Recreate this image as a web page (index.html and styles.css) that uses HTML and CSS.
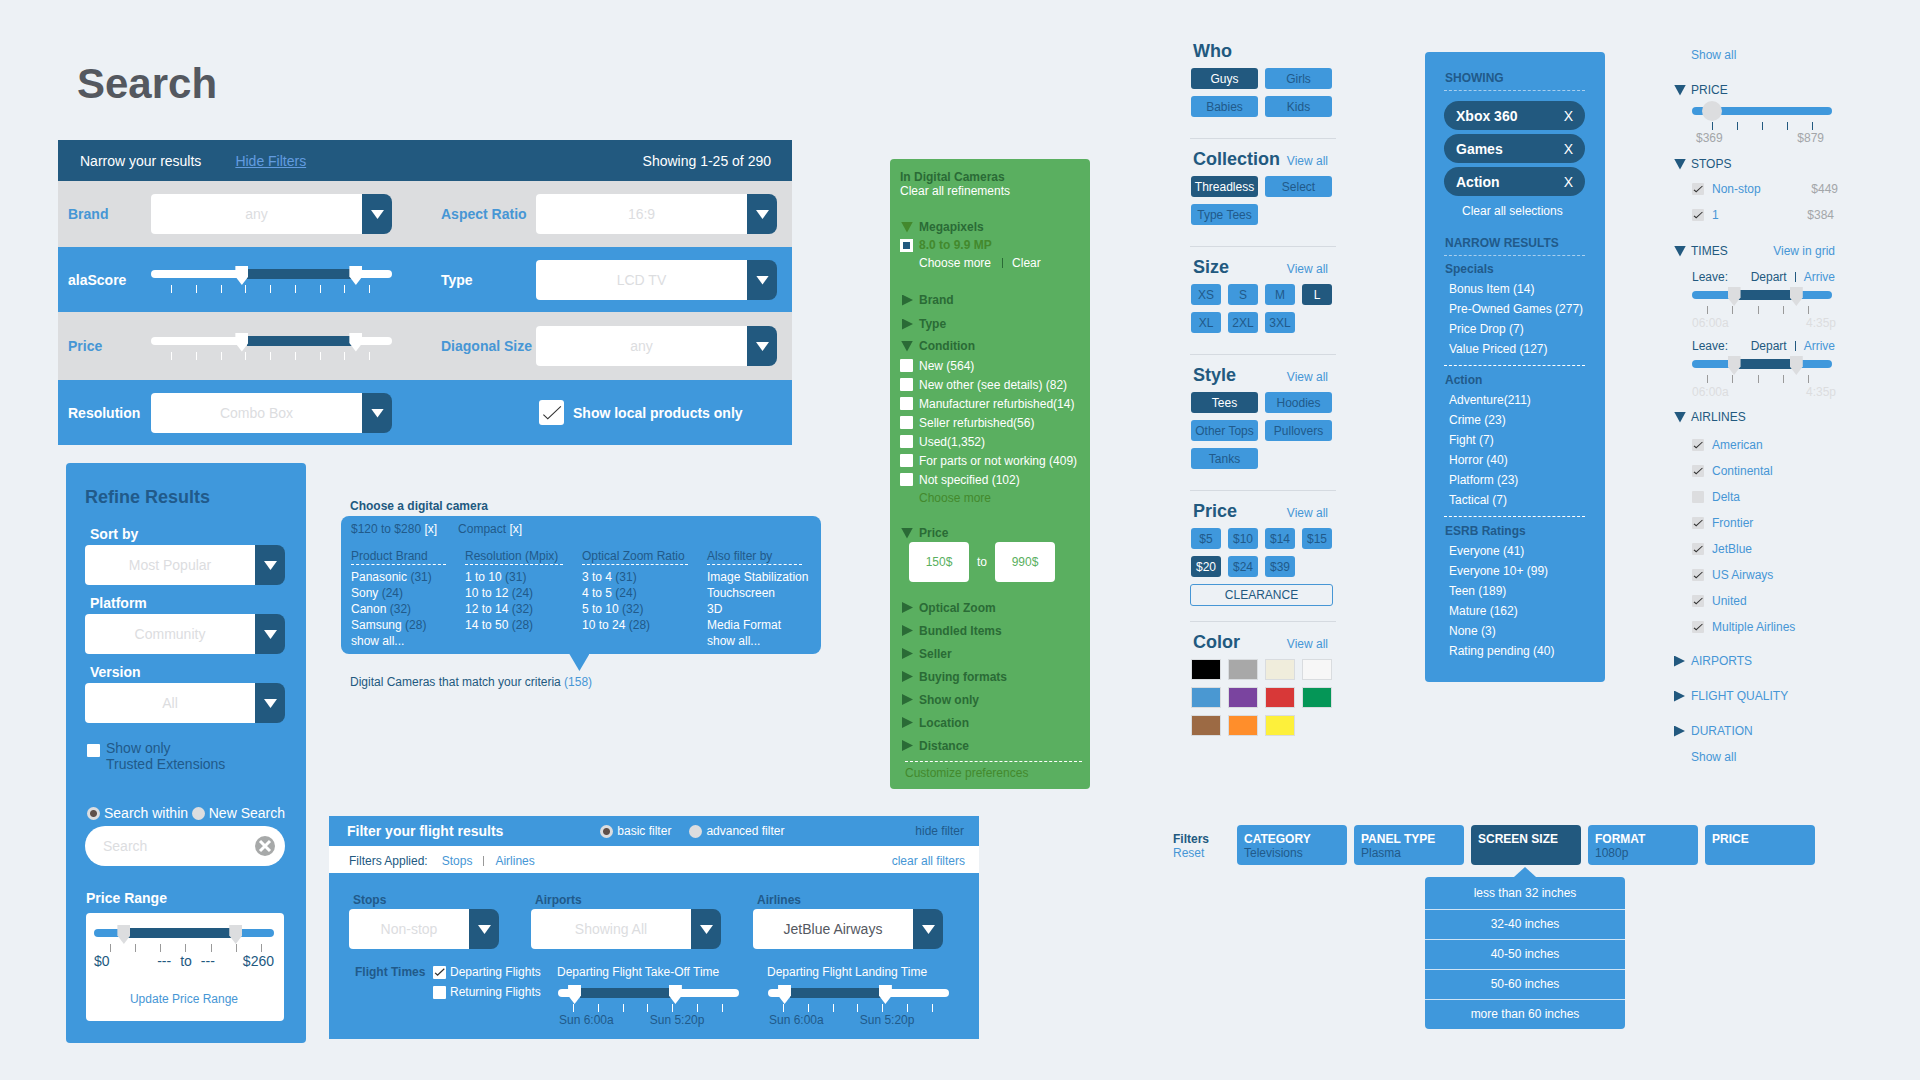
FILE: index.html
```html
<!DOCTYPE html>
<html lang="en">
  <head>
    <meta charset="UTF-8">
    <meta name="viewport" content="width=device-width, initial-scale=1.0">
    <title>Search</title>
    <link rel="stylesheet" href="styles.css">
  </head>
  <body>
    <main class="page">
      <div class="left">
        <h1>Search</h1>
        <div class="panels">

          <!-- narrow your results -->
          <form class="narrow">
            <div class="narrow_head">
              <span>Narrow your results</span>
              <a href="#">Hide Filters</a>
              <span class="push">Showing 1-25 of 290</span>
            </div>
            <div class="narrow_row grey">
              <label for="brand">Brand</label>
              <div class="combo"><select id="brand"><option>any</option></select></div>
              <label class="second" for="ratio">Aspect Ratio</label>
              <div class="combo"><select id="ratio"><option>16:9</option></select></div>
            </div>
            <div class="narrow_row">
              <label for="score_min">alaScore</label>
              <div class="slider">
                <div class="track"><span class="fill" style="left:40%;width:46%"></span></div>
                <input id="score_min" type="range" value="37">
                <input type="range" value="87" aria-label="alaScore maximum">
                <div class="ticks"><i></i><i></i><i></i><i></i><i></i><i></i><i></i><i></i><i></i></div>
              </div>
              <label class="second" for="type">Type</label>
              <div class="combo"><select id="type"><option>LCD TV</option></select></div>
            </div>
            <div class="narrow_row grey tall">
              <label for="price_min">Price</label>
              <div class="slider">
                <div class="track"><span class="fill" style="left:40%;width:46%"></span></div>
                <input id="price_min" type="range" value="37">
                <input type="range" value="87" aria-label="Price maximum">
                <div class="ticks"><i></i><i></i><i></i><i></i><i></i><i></i><i></i><i></i><i></i></div>
              </div>
              <label class="second" for="diag">Diagonal Size</label>
              <div class="combo"><select id="diag"><option>any</option></select></div>
            </div>
            <div class="narrow_row">
              <label for="res">Resolution</label>
              <div class="combo"><select id="res"><option>Combo Box</option></select></div>
              <label class="local"><input class="box big" type="checkbox" checked>Show local products only</label>
            </div>
          </form>

          <!-- refine results -->
          <form class="refine">
            <h2>Refine Results</h2>
            <label class="top" for="sort">Sort by</label>
            <div class="combo"><select id="sort"><option>Most Popular</option></select></div>
            <label class="top" for="platform">Platform</label>
            <div class="combo"><select id="platform"><option>Community</option></select></div>
            <label class="top" for="version">Version</label>
            <div class="combo"><select id="version"><option>All</option></select></div>
            <label class="trusted"><input class="box" type="checkbox"><span>Show only<br>Trusted Extensions</span></label>
            <div class="radios">
              <label><input class="dot" type="radio" name="scope" checked>Search within</label>
              <label><input class="dot" type="radio" name="scope">New Search</label>
            </div>
            <div class="searchbox">
              <input type="text" placeholder="Search" aria-label="Search">
              <button type="button" aria-label="Clear search">
                <svg width="20" height="20" viewBox="0 0 20 20"><circle cx="10" cy="10" r="10" fill="#a7a9a9"/><path d="M5 5L15 15M15 5L5 15" stroke="#fff" stroke-width="3"/></svg>
              </button>
            </div>
            <h3>Price Range</h3>
            <div class="range_card">
              <div class="slider blue">
                <div class="track"><span class="fill" style="left:18%;width:60%"></span></div>
                <input type="range" value="14" aria-label="Minimum price">
                <input type="range" value="81" aria-label="Maximum price">
                <div class="ticks"><i></i><i></i><i></i><i></i><i></i><i></i><i></i></div>
              </div>
              <div class="range_text"><span>$0</span><span class="mid"><span>---</span><span>to</span><span>---</span></span><span>$260</span></div>
              <a href="#">Update Price Range</a>
            </div>
          </form>

          <!-- digital camera box -->
          <section class="camera">
            <h4>Choose a digital camera</h4>
            <div class="bubble">
              <div class="tags">
                <span>$120 to $280 <a href="#">[x]</a></span>
                <span>Compact <a href="#">[x]</a></span>
              </div>
              <div class="cols">
                <div>
                  <h5>Product Brand</h5>
                  <ul>
                    <li><a href="#">Panasonic</a> (31)</li>
                    <li><a href="#">Sony</a> (24)</li>
                    <li><a href="#">Canon</a> (32)</li>
                    <li><a href="#">Samsung</a> (28)</li>
                    <li><a href="#">show all...</a></li>
                  </ul>
                </div>
                <div>
                  <h5>Resolution (Mpix)</h5>
                  <ul>
                    <li><a href="#">1 to 10</a> (31)</li>
                    <li><a href="#">10 to 12</a> (24)</li>
                    <li><a href="#">12 to 14</a> (32)</li>
                    <li><a href="#">14 to 50</a> (28)</li>
                  </ul>
                </div>
                <div>
                  <h5>Optical Zoom Ratio</h5>
                  <ul>
                    <li><a href="#">3 to 4</a> (31)</li>
                    <li><a href="#">4 to 5</a> (24)</li>
                    <li><a href="#">5 to 10</a> (32)</li>
                    <li><a href="#">10 to 24</a> (28)</li>
                  </ul>
                </div>
                <div>
                  <h5>Also filter by</h5>
                  <ul>
                    <li><a href="#">Image Stabilization</a></li>
                    <li><a href="#">Touchscreen</a></li>
                    <li><a href="#">3D</a></li>
                    <li><a href="#">Media Format</a></li>
                    <li><a href="#">show all...</a></li>
                  </ul>
                </div>
              </div>
            </div>
            <p>Digital Cameras that match your criteria <a href="#">(158)</a></p>
          </section>

          <!-- green sidebar -->
          <form class="green">
            <b>In Digital Cameras</b>
            <a href="#">Clear all refinements</a>
            <div class="mega">
              <button type="button" class="fold open olive">Megapixels</button>
              <label class="item picked"><input class="square" type="checkbox" checked>8.0 to 9.9 MP</label>
              <div class="more"><a href="#">Choose more</a><i class="bar"></i><a href="#">Clear</a></div>
            </div>
            <button type="button" class="fold spaced">Brand</button>
            <button type="button" class="fold spaced">Type</button>
            <button type="button" class="fold open cond">Condition</button>
            <label class="item"><input class="box" type="checkbox">New (564)</label>
            <label class="item"><input class="box" type="checkbox">New other (see details) (82)</label>
            <label class="item"><input class="box" type="checkbox">Manufacturer refurbished(14)</label>
            <label class="item"><input class="box" type="checkbox">Seller refurbished(56)</label>
            <label class="item"><input class="box" type="checkbox">Used(1,352)</label>
            <label class="item"><input class="box" type="checkbox">For parts or not working (409)</label>
            <label class="item"><input class="box" type="checkbox">Not specified (102)</label>
            <a class="dim" href="#">Choose more</a>
            <button type="button" class="fold open price">Price</button>
            <div class="from_to">
              <input type="text" value="150$" aria-label="Price from">
              <span>to</span>
              <input type="text" value="990$" aria-label="Price to">
            </div>
            <div class="folds">
              <button type="button" class="fold">Optical Zoom</button>
              <button type="button" class="fold">Bundled Items</button>
              <button type="button" class="fold">Seller</button>
              <button type="button" class="fold">Buying formats</button>
              <button type="button" class="fold">Show only</button>
              <button type="button" class="fold">Location</button>
              <button type="button" class="fold">Distance</button>
            </div>
            <a class="custom" href="#">Customize preferences</a>
          </form>

          <!-- flight filter -->
          <form class="flight">
            <div class="flight_head">
              <h3>Filter your flight results</h3>
              <label><input class="dot" type="radio" name="mode" checked>basic filter</label>
              <label><input class="dot" type="radio" name="mode">advanced filter</label>
              <a class="push" href="#">hide filter</a>
            </div>
            <div class="applied">
              <span>Filters Applied:</span>
              <a href="#">Stops</a><i class="bar"></i><a href="#">Airlines</a>
              <a class="push" href="#">clear all filters</a>
            </div>
            <div class="flight_combos">
              <div>
                <label for="stops">Stops</label>
                <div class="combo"><select id="stops"><option>Non-stop</option></select></div>
              </div>
              <div>
                <label for="airports">Airports</label>
                <div class="combo"><select id="airports"><option>Showing All</option></select></div>
              </div>
              <div>
                <label for="airlines">Airlines</label>
                <div class="combo chosen"><select id="airlines"><option>JetBlue Airways</option></select></div>
              </div>
            </div>
            <div class="flight_times">
              <b>Flight Times</b>
              <div class="checks">
                <label><input class="box" type="checkbox" checked>Departing Flights</label>
                <label><input class="box" type="checkbox">Returning Flights</label>
              </div>
              <div class="takeoff">
                <span>Departing Flight Take-Off Time</span>
                <div class="slider">
                  <div class="track"><span class="fill" style="left:12%;width:53%"></span></div>
                  <input type="range" value="6" aria-label="Earliest take-off">
                  <input type="range" value="66" aria-label="Latest take-off">
                  <div class="ticks"><i></i><i></i><i></i><i></i><i></i><i></i><i></i></div>
                </div>
                <div class="hours"><span>Sun 6:00a</span><span>Sun 5:20p</span></div>
              </div>
              <div>
                <span>Departing Flight Landing Time</span>
                <div class="slider">
                  <div class="track"><span class="fill" style="left:12%;width:53%"></span></div>
                  <input type="range" value="6" aria-label="Earliest landing">
                  <input type="range" value="66" aria-label="Latest landing">
                  <div class="ticks"><i></i><i></i><i></i><i></i><i></i><i></i><i></i></div>
                </div>
                <div class="hours"><span>Sun 6:00a</span><span>Sun 5:20p</span></div>
              </div>
            </div>
          </form>
        </div>
      </div>

      <div class="right">
        <div class="facets">

          <!-- t-shirt store -->
          <div class="shop">
            <section>
              <div class="shop_head"><h2>Who</h2></div>
              <div class="chips"><button class="on">Guys</button><button>Girls</button><button>Babies</button><button>Kids</button></div>
            </section>
            <section>
              <div class="shop_head"><h2>Collection</h2><a href="#">View all</a></div>
              <div class="chips"><button class="on">Threadless</button><button>Select</button><button>Type Tees</button></div>
            </section>
            <section>
              <div class="shop_head"><h2>Size</h2><a href="#">View all</a></div>
              <div class="chips four"><button>XS</button><button>S</button><button>M</button><button class="on">L</button><button>XL</button><button>2XL</button><button>3XL</button></div>
            </section>
            <section>
              <div class="shop_head"><h2>Style</h2><a href="#">View all</a></div>
              <div class="chips"><button class="on">Tees</button><button>Hoodies</button><button>Other Tops</button><button>Pullovers</button><button>Tanks</button></div>
            </section>
            <section class="prices">
              <div class="shop_head"><h2>Price</h2><a href="#">View all</a></div>
              <div class="chips four"><button>$5</button><button>$10</button><button>$14</button><button>$15</button><button class="on">$20</button><button>$24</button><button>$39</button></div>
              <button class="clearance">CLEARANCE</button>
            </section>
            <section>
              <div class="shop_head"><h2>Color</h2><a href="#">View all</a></div>
              <div class="chips four swatches">
                <button class="black" aria-label="Black"></button>
                <button class="silver" aria-label="Grey"></button>
                <button class="cream" aria-label="Cream"></button>
                <button class="white" aria-label="White"></button>
                <button class="sky" aria-label="Blue"></button>
                <button class="purple" aria-label="Purple"></button>
                <button class="red" aria-label="Red"></button>
                <button class="leaf" aria-label="Green"></button>
                <button class="brown" aria-label="Brown"></button>
                <button class="orange" aria-label="Orange"></button>
                <button class="yellow" aria-label="Yellow"></button>
              </div>
            </section>
          </div>

          <!-- game store -->
          <div class="games">
            <h3>SHOWING</h3>
            <div class="pills">
              <button><b>Xbox 360</b><span>X</span></button>
              <button><b>Games</b><span>X</span></button>
              <button><b>Action</b><span>X</span></button>
            </div>
            <a class="clear" href="#">Clear all selections</a>
            <h3>NARROW RESULTS</h3>
            <h4>Specials</h4>
            <ul>
              <li><a href="#">Bonus Item (14)</a></li>
              <li><a href="#">Pre-Owned Games (277)</a></li>
              <li><a href="#">Price Drop (7)</a></li>
              <li><a href="#">Value Priced (127)</a></li>
            </ul>
            <h4 class="ruled">Action</h4>
            <ul>
              <li><a href="#">Adventure(211)</a></li>
              <li><a href="#">Crime (23)</a></li>
              <li><a href="#">Fight (7)</a></li>
              <li><a href="#">Horror (40)</a></li>
              <li><a href="#">Platform (23)</a></li>
              <li><a href="#">Tactical (7)</a></li>
            </ul>
            <h4 class="ruled">ESRB Ratings</h4>
            <ul>
              <li><a href="#">Everyone (41)</a></li>
              <li><a href="#">Everyone 10+ (99)</a></li>
              <li><a href="#">Teen (189)</a></li>
              <li><a href="#">Mature (162)</a></li>
              <li><a href="#">None (3)</a></li>
              <li><a href="#">Rating pending (40)</a></li>
            </ul>
          </div>

          <!-- travel filters -->
          <form class="travel">
            <a class="all" href="#">Show all</a>
            <button type="button" class="fold open t_price">PRICE</button>
            <div class="inset">
              <div class="slider blue round">
                <div class="track"></div>
                <input type="range" value="8" aria-label="Price">
                <div class="ticks"><i></i><i></i><i></i><i></i><i></i></div>
              </div>
              <div class="ends"><span>$369</span><span>$879</span></div>
            </div>
            <button type="button" class="fold open t_stops">STOPS</button>
            <div class="stop"><label><input class="box" type="checkbox" checked>Non-stop</label><span>$449</span></div>
            <div class="stop one"><label><input class="box" type="checkbox" checked>1</label><span>$384</span></div>
            <div class="t_times"><button type="button" class="fold open">TIMES</button><a href="#">View in grid</a></div>
            <div class="inset leave">
              <div class="leave_head"><span>Leave:</span><span class="push">Depart</span><i class="bar"></i><a href="#">Arrive</a></div>
              <div class="slider blue">
                <div class="track"><span class="fill" style="left:30%;width:42%"></span></div>
                <input type="range" value="28" aria-label="Depart after">
                <input type="range" value="77" aria-label="Depart before">
                <div class="ticks"><i></i><i></i><i></i><i></i><i></i></div>
              </div>
              <div class="faint"><span>06:00a</span><span>4:35p</span></div>
            </div>
            <div class="inset leave">
              <div class="leave_head"><span>Leave:</span><span class="push">Depart</span><i class="bar"></i><a href="#">Arrive</a></div>
              <div class="slider blue">
                <div class="track"><span class="fill" style="left:30%;width:42%"></span></div>
                <input type="range" value="28" aria-label="Return after">
                <input type="range" value="77" aria-label="Return before">
                <div class="ticks"><i></i><i></i><i></i><i></i><i></i></div>
              </div>
              <div class="faint"><span>06:00a</span><span>4:35p</span></div>
            </div>
            <button type="button" class="fold open t_air">AIRLINES</button>
            <div class="carriers">
              <label><input class="box" type="checkbox" checked>American</label>
              <label><input class="box" type="checkbox" checked>Continental</label>
              <label><input class="box" type="checkbox">Delta</label>
              <label><input class="box" type="checkbox" checked>Frontier</label>
              <label><input class="box" type="checkbox" checked>JetBlue</label>
              <label><input class="box" type="checkbox" checked>US Airways</label>
              <label><input class="box" type="checkbox" checked>United</label>
              <label><input class="box" type="checkbox" checked>Multiple Airlines</label>
            </div>
            <div class="t_closed">
              <button type="button" class="fold">AIRPORTS</button>
              <button type="button" class="fold">FLIGHT QUALITY</button>
              <button type="button" class="fold">DURATION</button>
            </div>
            <a class="all last" href="#">Show all</a>
          </form>
        </div>

        <!-- tv filter tabs -->
        <div class="tabs_bar">
          <div class="tabs_label"><b>Filters</b><a href="#">Reset</a></div>
          <div class="tab"><button><b>CATEGORY</b><span>Televisions</span></button></div>
          <div class="tab"><button><b>PANEL TYPE</b><span>Plasma</span></button></div>
          <div class="tab active">
            <button><b>SCREEN SIZE</b></button>
            <ul class="menu">
              <li><a href="#">less than 32 inches</a></li>
              <li><a href="#">32-40 inches</a></li>
              <li><a href="#">40-50 inches</a></li>
              <li><a href="#">50-60 inches</a></li>
              <li><a href="#">more than 60 inches</a></li>
            </ul>
          </div>
          <div class="tab"><button><b>FORMAT</b><span>1080p</span></button></div>
          <div class="tab"><button><b>PRICE</b></button></div>
        </div>
      </div>
    </main>
  </body>
</html>
```
FILE: styles.css
```css
*{
  box-sizing: border-box;
  margin: 0;
  padding: 0;
}
:root{
  --bg: #edf1f5;
  --blue: #3f98dc;
  --navy: #22597f;
  --ink: #215a8a;
  --link: #4696d5;
  --grey: #dcdddf;
  --green: #5aaf60;
  --moss: #2a6b36;
  --olive: #43892d;
}
body{
  background: var(--bg);
  color: var(--navy);
  font: 12px/16px "Liberation Sans", Arial, sans-serif;
}
a{
  color: inherit;
  text-decoration: none;
}
ul{
  list-style: none;
}
button, input, select{
  font: inherit;
  color: inherit;
  border: 0;
  background: none;
}
button, select, label{
  cursor: pointer;
}
.push{
  margin-left: auto;
}
.page{
  display: grid;
  grid-template-columns: minmax(0, 1032fr) minmax(0, 667fr);
  column-gap: 83px;
  align-items: start;
  padding: 0 80px 0 58px;
}
h1{
  margin: 60px 0 32px 19px;
  font-size: 42px;
  line-height: 48px;
  color: #54585f;
}
.panels{
  display: grid;
  grid-template-columns: minmax(0, 271fr) minmax(0, 561fr) minmax(0, 200fr);
  grid-template-rows: auto 1fr auto;
  row-gap: 18px;
  align-items: start;
}

/* form parts */
.combo{
  position: relative;
  height: 40px;
}
.combo select{
  appearance: none;
  width: 100%;
  height: 100%;
  padding-right: 30px;
  border-radius: 4px 8px 8px 4px;
  background: linear-gradient(var(--navy), var(--navy)) right / 30px 100% no-repeat white;
  color: var(--grey);
  font-size: 14px;
  font-weight: normal;
  text-align: center;
  text-align-last: center;
}
.combo.chosen select{
  color: #54585f;
}
.combo::after{
  content: "";
  position: absolute;
  right: 8px;
  top: 16px;
  width: 13px;
  height: 9px;
  background: white;
  clip-path: polygon(0 0, 100% 0, 50% 100%);
  pointer-events: none;
}
.box, .square, .dot{
  appearance: none;
  flex: none;
  width: 13px;
  height: 13px;
  background: white;
}
.box{
  border-radius: 1px;
}
.box.big{
  width: 25px;
  height: 25px;
  border-radius: 3px;
}
.box:checked::before{
  content: "";
  display: block;
  width: 100%;
  height: 100%;
  background: #333;
  clip-path: polygon(13% 60%, 20% 54%, 35% 67%, 84% 22%, 90% 28%, 35% 80%);
}
.box.big:checked::before{
  clip-path: polygon(16% 60%, 19% 57%, 35% 72%, 86% 24%, 89% 27%, 35% 78%);
}
.square:checked{
  border: 3px solid white;
  background: var(--navy);
}
.dot{
  border-radius: 50%;
  background: var(--grey);
}
.dot:checked{
  background: radial-gradient(circle, #5f504a 3px, var(--grey) 4px);
}
.bar{
  width: 1px;
  height: 10px;
  background: currentColor;
}

/* sliders: two range inputs laid over one track */
.slider{
  position: relative;
  padding-top: 4px;
}
.track{
  display: flex;
  align-items: center;
  height: 8px;
  border-radius: 4px;
  background: white;
}
.fill{
  position: absolute;
  height: 10px;
  background: var(--navy);
}
.slider input{
  appearance: none;
  position: absolute;
  left: 0;
  top: 0;
  width: 100%;
  height: 19px;
  pointer-events: none;
}
.slider input::-webkit-slider-thumb{
  appearance: none;
  width: 13px;
  height: 19px;
  background: white;
  clip-path: polygon(0 0, 100% 0, 100% 55%, 50% 100%, 0 55%);
  pointer-events: auto;
}
.ticks{
  display: flex;
  justify-content: space-between;
  margin-top: 7px;
  padding: 0 22px 0 20px;
}
.ticks i{
  width: 1px;
  height: 8px;
  background: white;
}
.slider.blue .track{
  background: var(--blue);
}
.slider.blue input::-webkit-slider-thumb{
  background: var(--grey);
}
.slider.blue .ticks i{
  background: #9a9a9a;
}
.slider.round{
  padding-top: 6px;
}
.slider.round input{
  height: 20px;
}
.slider.round input::-webkit-slider-thumb{
  width: 20px;
  height: 20px;
  border-radius: 50%;
  clip-path: none;
}

/* disclosure rows */
.fold{
  display: flex;
  align-items: center;
  line-height: inherit;
}
.fold::before{
  content: "";
  width: 11px;
  height: 11px;
  margin: 0 6px 0 2px;
  background: currentColor;
  clip-path: polygon(0 0, 100% 50%, 0 100%);
}
.fold.open::before{
  width: 12px;
  margin: 0 6px 0 1px;
  clip-path: polygon(0 0, 100% 0, 50% 100%);
}

/* narrow your results */
.narrow{
  grid-area: 1 / 1 / 2 / 3;
  margin-right: 98px;
  font-size: 14px;
}
.narrow_head{
  display: flex;
  align-items: center;
  gap: 34px;
  height: 41px;
  padding: 0 21px 0 22px;
  background: var(--navy);
  color: white;
}
.narrow_head a{
  color: #629ce0;
  text-decoration: underline;
}
.narrow_row{
  display: grid;
  grid-template-columns: 83px 1fr 49px 95px 1fr;
  align-items: center;
  height: 65px;
  padding: 0 15px 0 10px;
  background: var(--blue);
  color: white;
  font-weight: bold;
}
.narrow_row.grey{
  height: 66px;
  background: var(--grey);
  color: var(--link);
}
.narrow_row.tall{
  height: 68px;
}
.narrow_row .second{
  grid-column: 4;
  white-space: nowrap;
}
.local{
  grid-column: 5;
  display: flex;
  align-items: center;
  gap: 9px;
  padding-left: 3px;
}

/* refine results */
.refine{
  grid-area: 2 / 1 / 4 / 2;
  margin: 0 23px 0 8px;
  padding: 23px 21px 22px 19px;
  border-radius: 4px;
  background: var(--blue);
  color: white;
  font-size: 14px;
}
.refine h2{
  margin-bottom: 18px;
  font-size: 18px;
  line-height: 22px;
  color: var(--ink);
}
.top{
  display: block;
  margin: 10px 0 3px;
  padding-left: 5px;
  font-weight: bold;
}
.trusted{
  display: flex;
  gap: 6px;
  margin: 17px 0 33px 2px;
  color: var(--ink);
}
.trusted .box{
  margin-top: 4px;
}
.radios{
  display: flex;
  justify-content: space-between;
  padding-left: 2px;
}
.radios label{
  display: flex;
  align-items: center;
  gap: 4px;
  white-space: nowrap;
}
.searchbox{
  display: flex;
  align-items: center;
  height: 40px;
  margin: 5px 0 24px;
  padding: 0 10px 0 18px;
  border-radius: 20px;
  background: white;
}
.searchbox input{
  flex: 1;
  min-width: 0;
  outline: 0;
  color: var(--navy);
}
.searchbox input::placeholder{
  color: var(--grey);
}
.searchbox svg{
  display: block;
}
.refine h3{
  margin: 0 1px 7px;
  font-size: 14px;
}
.range_card{
  margin: 0 1px;
  padding: 12px 10px 14px 8px;
  border-radius: 4px;
  background: white;
  color: var(--navy);
}
.range_card .ticks{
  padding: 0 12px 0 16px;
}
.range_text, .mid{
  display: flex;
}
.range_text{
  margin-top: 1px;
}
.mid{
  gap: 9px;
  margin: 0 28px 0 auto;
}
.range_card a{
  display: block;
  margin-top: 22px;
  font-size: 12px;
  text-align: center;
  color: var(--link);
}

/* digital camera box */
.camera{
  grid-area: 2 / 2 / 3 / 3;
  margin: 35px 69px 0 12px;
}
.camera h4{
  margin: 0 0 2px 9px;
  font-size: 12px;
}
.bubble{
  position: relative;
  padding: 5px 0 5px 10px;
  border-radius: 8px;
  background: var(--blue);
  color: var(--ink);
}
.bubble::after{
  content: "";
  position: absolute;
  left: 48%;
  top: 100%;
  width: 20px;
  height: 17px;
  margin-left: -2px;
  background: var(--blue);
  clip-path: polygon(0 0, 100% 0, 50% 100%);
}
.bubble a{
  color: white;
}
.tags{
  display: flex;
  gap: 21px;
  margin-bottom: 11px;
}
.cols{
  display: grid;
  grid-template-columns: 114fr 117fr 125fr 114fr;
  white-space: nowrap;
}
.cols h5{
  margin: 0 19px 4px 0;
  border-bottom: 1px dashed white;
  font-size: 12px;
  font-weight: normal;
}
.camera p{
  margin: 20px 0 0 9px;
}
.camera p a{
  color: var(--link);
}

/* green sidebar */
.green{
  grid-area: 1 / 3 / 3 / 4;
  display: flex;
  flex-direction: column;
  align-items: stretch;
  margin: 19px 0 9px;
  padding: 11px 8px 8px 10px;
  border-radius: 4px;
  background: var(--green);
  color: white;
  line-height: 14px;
  white-space: nowrap;
}
.green b, .green .fold{
  color: var(--moss);
  font-weight: bold;
}
.mega{
  margin: 20px 0 16px;
  line-height: 18px;
}
.green .olive::before{
  background: var(--olive);
}
.green .item{
  display: flex;
  align-items: center;
  gap: 6px;
  height: 19px;
}
.green .picked{
  height: 18px;
  font-weight: bold;
  color: var(--olive);
}
.more{
  display: flex;
  align-items: center;
  gap: 9px;
  padding-left: 19px;
}
.more .bar{
  margin-left: 2px;
  background: var(--moss);
}
.green .spaced{
  height: 24px;
}
.green .cond{
  height: 20px;
}
.dim{
  padding-left: 19px;
  line-height: 19px;
  color: var(--olive);
}
.green .price{
  height: 18px;
  margin-top: 16px;
}
.from_to{
  display: flex;
  align-items: center;
  gap: 8px;
  margin: 0 27px 14px 9px;
}
.from_to input{
  flex: 1;
  min-width: 0;
  height: 40px;
  border-radius: 4px;
  background: white;
  color: var(--green);
  text-align: center;
}
.folds .fold{
  height: 23px;
}
.custom{
  margin: 4px 0 0 5px;
  padding-top: 3px;
  border-top: 1px dashed white;
  line-height: 16px;
  color: var(--olive);
}

/* flight filter */
.flight{
  grid-area: 3 / 2 / 4 / 4;
  margin: 0 111px 5px 0;
  background: var(--blue);
  color: white;
}
.flight_head, .applied{
  display: flex;
  align-items: center;
  height: 30px;
  padding: 0 15px 0 18px;
}
.flight_head h3{
  margin-right: 79px;
  font-size: 14px;
}
.flight_head label, .checks label{
  display: flex;
  align-items: center;
  gap: 4px;
}
.flight_head label{
  margin-left: 18px;
}
.flight_head a{
  color: var(--ink);
}
.applied{
  height: 27px;
  padding: 2px 14px 0 20px;
  background: white;
  color: var(--navy);
}
.applied a{
  color: var(--link);
}
.applied span{
  margin-right: 14px;
}
.applied .bar{
  margin: 0 11px;
  background: #999;
}
.flight_combos{
  display: grid;
  grid-template-columns: 150fr 190fr 190fr;
  gap: 32px;
  padding: 19px 36px 15px 20px;
}
.flight_combos label{
  display: block;
  margin-bottom: 1px;
  padding-left: 4px;
  font-weight: bold;
  color: var(--ink);
}
.flight_times{
  display: grid;
  grid-template-columns: 78px 124px 210fr 182fr;
  padding: 0 30px 11px 26px;
}
.flight_times b, .hours{
  color: var(--ink);
}
.checks{
  display: flex;
  flex-direction: column;
  gap: 4px;
}
.takeoff{
  padding-right: 28px;
}
.flight_times .slider{
  margin: 5px 0 0 1px;
}
.flight_times .ticks{
  padding: 0 24px 0 15px;
}
.flight_times .takeoff .ticks{
  padding-right: 16px;
}
.flight_times .ticks{
  padding: 0 16px 0 15px;
}
.hours{
  display: flex;
  gap: 36px;
  padding-left: 2px;
}

/* right side */
.facets{
  display: grid;
  grid-template-columns: minmax(0, 235fr) minmax(0, 249fr) minmax(0, 166fr);
  align-items: start;
  padding-left: 17px;
}
.shop{
  margin-right: 89px;
  padding-top: 30px;
}
.shop section{
  padding: 9px 0 21px;
  border-top: 1px solid #d5dae0;
}
.shop section:first-child{
  border-color: transparent;
}
.shop_head{
  display: flex;
  align-items: baseline;
  justify-content: space-between;
  margin-bottom: 6px;
  padding: 0 8px 0 3px;
}
.shop_head h2{
  font-size: 18px;
  line-height: 22px;
}
.shop_head a{
  color: var(--link);
}
.chips{
  display: grid;
  grid-template-columns: 1fr 1fr;
  gap: 7px;
  padding: 0 4px 0 1px;
}
.chips.four{
  grid-template-columns: repeat(4, 1fr);
}
.chips button{
  height: 21px;
  border-radius: 3px;
  background: var(--blue);
  color: var(--ink);
  white-space: nowrap;
}
.chips .on{
  background: var(--navy);
  color: white;
}
.shop .prices{
  padding-bottom: 15px;
}
.clearance{
  display: block;
  width: 143px;
  max-width: 100%;
  height: 22px;
  margin-top: 7px;
  border: 1px solid var(--link);
  border-radius: 3px;
}
.swatches button{
  border: 1px solid #d9dcdf;
  border-radius: 0;
}
.swatches .black{ background: #000; }
.swatches .silver{ background: #a8a8a8; }
.swatches .cream{ background: #f0eddc; }
.swatches .white{ background: #f7f7f7; }
.swatches .sky{ background: #4a98d2; }
.swatches .purple{ background: #7a449f; }
.swatches .red{ background: #d83838; }
.swatches .leaf{ background: #059657; }
.swatches .brown{ background: #9c6a44; }
.swatches .orange{ background: #ff8e2b; }
.swatches .yellow{ background: #fdf03b; }

/* game store */
.games{
  margin: 52px 69px 0 0;
  padding: 17px 20px 21px 19px;
  border-radius: 4px;
  background: var(--blue);
  color: white;
  white-space: nowrap;
}
.games h3, .games h4{
  font-size: 12px;
  color: var(--ink);
}
.games h3{
  padding: 1px 0 4px 1px;
  border-bottom: 1px dashed #a9cfee;
}
.games h4{
  padding: 5px 0 2px 1px;
}
.games .ruled{
  margin-top: 6px;
  padding-top: 6px;
  border-top: 1px dashed white;
}
.pills{
  display: flex;
  flex-direction: column;
  gap: 4px;
  margin: 10px 0 7px;
}
.pills button{
  display: flex;
  align-items: center;
  justify-content: space-between;
  height: 29px;
  padding: 0 12px;
  border-radius: 15px;
  background: var(--navy);
  font-size: 14px;
}
.clear{
  display: block;
  margin-bottom: 15px;
  padding-left: 18px;
}
.games ul{
  padding-left: 5px;
  line-height: 20px;
}

/* travel filters */
.travel{
  padding-top: 47px;
}
.all{
  display: block;
  margin-left: 17px;
  color: var(--link);
}
.travel .fold::before{
  margin: 0 6px 0 0;
  background: var(--navy);
}
.travel .fold.open::before{
  margin: 0 5px 0 0;
}
.t_price{
  margin: 19px 0 3px;
}
.inset{
  margin: 0 8px 0 18px;
}
.inset .ticks{
  padding: 0 23px 0 15px;
}
.inset .round .ticks{
  padding: 0 19px 0 20px;
}
.slider.round .ticks i{
  background: var(--navy);
}
.ends{
  display: flex;
  justify-content: space-between;
  padding: 0 8px 0 4px;
  color: #a3a6a9;
}
.t_stops{
  margin: 10px 0 9px;
}
.stop{
  display: flex;
  justify-content: space-between;
  margin: 0 2px 10px 18px;
}
.stop.one{
  margin-right: 6px;
}
.stop label, .carriers label{
  display: flex;
  align-items: center;
  gap: 8px;
  color: var(--link);
}
.stop span{
  color: #a3a6a9;
}
.travel .box{
  width: 12px;
  height: 12px;
  background: var(--grey);
}
.t_times{
  display: flex;
  justify-content: space-between;
  margin: 20px 5px 10px 0;
}
.t_times a, .leave_head a{
  color: var(--link);
}
.leave{
  margin-bottom: 7px;
}
.leave_head{
  display: flex;
  align-items: center;
  gap: 8px;
  margin: 0 -3px 2px 0;
}
.faint{
  display: flex;
  justify-content: space-between;
  margin: 1px -4px 0 0;
  color: var(--grey);
}
.t_air{
  margin: 9px 0 7px;
}
.carriers{
  display: flex;
  flex-direction: column;
  margin: 0 0 13px 18px;
  line-height: 26px;
}
.t_closed{
  display: flex;
  flex-direction: column;
  align-items: start;
  gap: 19px;
  margin-bottom: 10px;
  color: var(--link);
}

/* tv filter tabs */
.tabs_bar{
  display: grid;
  grid-template-columns: 57px repeat(5, minmax(0, 1fr));
  column-gap: 7px;
  margin-top: 60px;
  padding-right: 25px;
  line-height: 14px;
}
.tabs_label{
  display: flex;
  flex-direction: column;
  padding-top: 7px;
}
.tabs_label a{
  color: var(--link);
}
.tab{
  position: relative;
}
.tab button{
  display: flex;
  flex-direction: column;
  width: 100%;
  height: 40px;
  padding: 7px 7px 0;
  border-radius: 4px;
  background: var(--blue);
  color: var(--ink);
  text-align: left;
  white-space: nowrap;
}
.tab b{
  color: white;
}
.tab.active button{
  background: var(--navy);
}
.menu{
  position: absolute;
  left: 50%;
  top: 52px;
  width: 200px;
  margin-left: -101px;
  border-radius: 4px;
  background: var(--blue);
  color: white;
  line-height: 32px;
  text-align: center;
}
.menu::before{
  content: "";
  position: absolute;
  left: 89px;
  bottom: 100%;
  width: 22px;
  height: 10px;
  background: var(--blue);
  clip-path: polygon(50% 0, 100% 100%, 0 100%);
}
.menu li + li{
  border-top: 1px solid #cfe4f6;
  line-height: 29px;
}
.menu a{
  display: block;
}
```
